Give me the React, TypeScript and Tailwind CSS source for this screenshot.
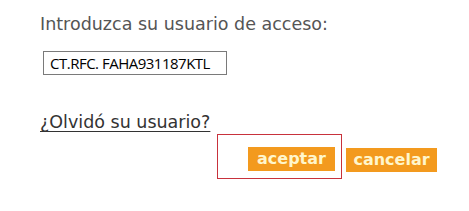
import React from "react";

export default function App() {
  return (
    <div className="w-[469px] h-[211px] bg-white relative overflow-hidden">
      <div className="pl-[40px] pt-[13px]">
        <p className="text-[17.5px] leading-[22px] text-[#555555] [font-family:'DejaVu_Sans',Verdana,sans-serif]">
          Introduzca su usuario de acceso:
        </p>
        <div className="mt-[16px] ml-[3px] w-[184px] h-[24px] border border-[#7a7a7a] flex items-center pl-[6px] whitespace-nowrap text-[15px] tracking-[-0.5px] text-black [font-family:'Open_Sans',sans-serif]">
          CT.RFC. FAHA931187KTL
        </div>
        <a
          href="#"
          className="block mt-[36px] w-fit text-[17.5px] leading-[22px] text-[#333333] underline underline-offset-[3px] [font-family:'DejaVu_Sans',Verdana,sans-serif]"
        >
          ¿Olvidó su usuario?
        </a>
        <div className="flex items-end ml-[177px] mt-[1px]">
          <div className="w-[125px] h-[45px] border border-[#c8323c] flex items-end justify-end pr-[6px] pb-[7px]">
            <button className="w-[87px] h-[24px] bg-[#f39a1e] text-[#fff6cc] text-[16px] font-bold leading-[24px] [font-family:'DejaVu_Sans',Verdana,sans-serif]">
              aceptar
            </button>
          </div>
          <button className="ml-[4px] mb-[7px] w-[91px] h-[24px] bg-[#f39a1e] text-[#fff6cc] text-[16px] font-bold leading-[24px] [font-family:'DejaVu_Sans',Verdana,sans-serif]">
            cancelar
          </button>
        </div>
      </div>
    </div>
  );
}
